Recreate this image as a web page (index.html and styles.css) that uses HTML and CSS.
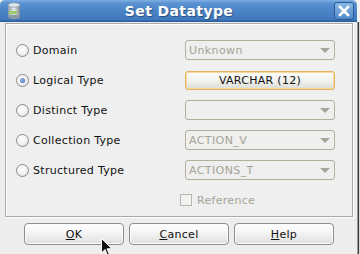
FILE: index.html
```html
<!DOCTYPE html>
<html>
<head>
<meta charset="utf-8">
<link rel="stylesheet" href="styles.css">
</head>
<body>
<div class="screen">
  <div class="window">
    <div class="titlebar">
      <div class="app-icon">
        <svg width="16" height="18" viewBox="0 0 16 18">
          <defs>
            <linearGradient id="cyl" x1="0" x2="1" y1="0" y2="0">
              <stop offset="0" stop-color="#8a9aa8"/>
              <stop offset="0.5" stop-color="#e8eef2"/>
              <stop offset="1" stop-color="#7a8894"/>
            </linearGradient>
          </defs>
          <rect x="2" y="3" width="12" height="12" fill="url(#cyl)"/>
          <ellipse cx="8" cy="15" rx="6" ry="2.2" fill="#8a98a4"/>
          <ellipse cx="8" cy="3" rx="6" ry="2.2" fill="#dde6ec" stroke="#7f8d99" stroke-width="0.6"/>
          <rect x="3" y="9" width="8" height="3" fill="#9ccf6a"/>
        </svg>
      </div>
      <div class="title">Set Datatype</div>
      <div class="close-btn">
        <svg width="12" height="12" viewBox="0 0 12 12"><path d="M2 2 L10 10 M10 2 L2 10" stroke="#fff" stroke-width="2.6" stroke-linecap="square"/></svg>
      </div>
    </div>
    <div class="body">
      <div class="panel">
        <div class="form">
          <label class="radio-row"><span class="radio"></span><span>Domain</span></label>
          <div class="combo disabled"><span>Unknown</span><span class="arrow"></span></div>

          <label class="radio-row"><span class="radio checked"></span><span>Logical Type</span></label>
          <div class="type-btn">VARCHAR (12)</div>

          <label class="radio-row"><span class="radio"></span><span>Distinct Type</span></label>
          <div class="combo disabled"><span></span><span class="arrow"></span></div>

          <label class="radio-row"><span class="radio"></span><span>Collection Type</span></label>
          <div class="combo disabled"><span>ACTION_V</span><span class="arrow"></span></div>

          <label class="radio-row"><span class="radio"></span><span>Structured Type</span></label>
          <div class="combo disabled"><span>ACTIONS_T</span><span class="arrow"></span></div>

          <div></div>
          <label class="check-row"><span class="checkbox"></span><span>Reference</span></label>
        </div>
      </div>
      <div class="buttons">
        <div class="btn"><span class="u">O</span>K</div>
        <div class="btn"><span class="u">C</span>ancel</div>
        <div class="btn"><span class="u">H</span>elp</div>
      </div>
    </div>
    <svg class="cursor" width="12" height="19" viewBox="0 0 12 19">
      <path d="M0.5 0.5 L0.5 15 L4 11.5 L6.5 17.5 L8.5 16.5 L6 10.8 L11 10.8 Z" fill="#111" stroke="#fff" stroke-width="1"/>
    </svg>
  </div>
  <div class="edge"></div>
</div>
</body>
</html>
```
FILE: styles.css
```css
* { box-sizing: border-box; }
html, body { margin: 0; padding: 0; }
body {
  width: 360px;
  height: 254px;
  overflow: hidden;
  background: #f4f4f4;
  font-family: "DejaVu Sans", "Liberation Sans", sans-serif;
}
.screen {
  display: flex;
  width: 360px;
  height: 254px;
  overflow: hidden;
}
.window {
  position: relative;
  width: 357px;
  height: 254px;
  display: flex;
  flex-direction: column;
  background: #ededed;
  overflow: hidden;
}
.edge {
  width: 3px;
  margin-top: 22px;
  background: linear-gradient(to right, #9a9a9a 0, #9a9a9a 1px, #3a3a3a 1px, #3a3a3a 2px, #d8d8d8 2px);
}
.titlebar {
  height: 22px;
  flex: none;
  display: flex;
  align-items: center;
  border-radius: 5px 5px 0 0;
  background: linear-gradient(to bottom, #7fb0e4 0, #5b93d2 3px, #4a84c6 11px, #3f78bc 20px, #2c5f9e 21px, #2c5f9e 22px);
  padding: 0 2px 0 6px;
}
.app-icon {
  width: 16px;
  height: 18px;
  flex: none;
}
.title {
  flex: 1;
  text-align: center;
  color: #fff;
  font-weight: bold;
  font-size: 14px;
  letter-spacing: 0.4px;
  text-shadow: 1px 1px 1px #2a4f80;
  padding-left: 2px;
}
.close-btn {
  width: 20px;
  height: 18px;
  flex: none;
  display: flex;
  align-items: center;
  justify-content: center;
  border: 1px solid #2b5a94;
  border-radius: 3px;
  background: linear-gradient(to bottom, #8ab8e8, #4f88c8);
  margin-right: 1px;
}
.body {
  flex: 1;
  display: flex;
  flex-direction: column;
  padding: 1px 4px 0 5px;
}
.panel {
  height: 194px;
  flex: none;
  border: 1px solid #a9a9a9;
  box-shadow: inset 1px 1px 0 #fff, 1px 1px 0 #fff;
  background: #efefef;
  padding: 16px 17px 0 10px;
}
.form {
  display: grid;
  grid-template-columns: 1fr 150px;
  grid-auto-rows: 20px;
  row-gap: 10px;
  align-items: center;
}
.radio-row, .check-row {
  display: flex;
  align-items: center;
  font-size: 11px;
  color: #111;
  letter-spacing: 0.3px;
}
.radio {
  width: 13px;
  height: 13px;
  border-radius: 50%;
  border: 1px solid #8a8a8a;
  background: radial-gradient(circle at 40% 35%, #ffffff 0, #f2f2f2 50%, #d8d8d8 100%);
  margin-right: 4px;
  flex: none;
  position: relative;
}
.radio.checked::after {
  content: "";
  position: absolute;
  left: 3px;
  top: 3px;
  width: 5px;
  height: 5px;
  border-radius: 50%;
  background: radial-gradient(circle at 40% 40%, #9ab8e8, #3660b0);
}
.combo {
  height: 20px;
  border: 1px solid #b0b09c;
  border-radius: 3px;
  display: flex;
  align-items: center;
  justify-content: space-between;
  padding: 0 4px 0 3px;
  font-size: 11px;
  color: #a4a496;
  letter-spacing: 0.4px;
  background: #efefef;
}
.arrow {
  width: 0;
  height: 0;
  border-left: 5px solid transparent;
  border-right: 5px solid transparent;
  border-top: 5px solid #a6a698;
  margin-top: 1px;
}
.type-btn {
  height: 19px;
  border: 1px solid #e0b460;
  border-radius: 3px;
  box-shadow: inset 0 0 0 1px #f6d99a;
  background: linear-gradient(to bottom, #fdfdfb 0, #f2f2ee 50%, #dcdcd6 100%);
  display: flex;
  align-items: center;
  justify-content: center;
  font-size: 11px;
  color: #111;
  letter-spacing: 0.3px;
}
.check-row {
  color: #a4a496;
  margin-left: -5px;
}
.checkbox {
  width: 12px;
  height: 12px;
  border: 1px solid #b8b8aa;
  background: #f2f2f2;
  margin-right: 5px;
  flex: none;
}
.buttons {
  display: flex;
  gap: 5px;
  padding-left: 19px;
  margin-top: 6px;
}
.btn {
  width: 100px;
  height: 22px;
  border: 1px solid #8f8f8f;
  border-radius: 4px;
  background: linear-gradient(to bottom, #ffffff 0, #f4f4f4 45%, #dedede 100%);
  box-shadow: inset 0 0 0 1px #fafafa;
  display: flex;
  align-items: center;
  justify-content: center;
  font-size: 11px;
  color: #111;
  letter-spacing: 0.3px;
}
.u { text-decoration: underline; }
.cursor {
  position: absolute;
  left: 101px;
  top: 238px;
}
```
